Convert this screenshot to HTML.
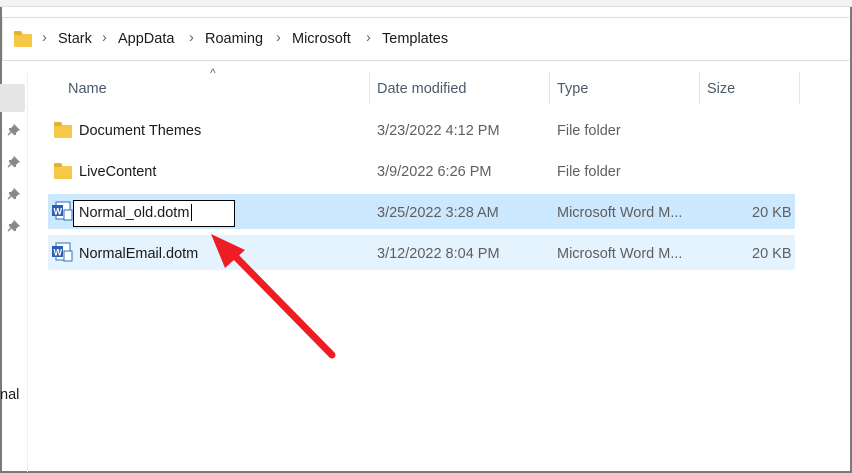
<!DOCTYPE html>
<html><head><meta charset="utf-8"><style>
body{margin:0;width:852px;height:473px;overflow:hidden;background:#fff;font-family:"Liberation Sans",sans-serif;position:relative;}
.a{position:absolute;}
.t{position:absolute;font-size:14.5px;color:#1a1a1a;white-space:nowrap;}
.g{color:#5f5f5f;}
.h{color:#4a5a6a;}
.folder{position:absolute;width:18px;height:13px;background:#f6c847;border-radius:1px;}
.folder:before{content:"";position:absolute;left:0;top:-3px;width:8px;height:4px;background:#e8b030;border-radius:1px 2px 0 0;}
</style></head><body>
<div class="a" style="left:0;top:0;width:2px;height:473px;background:#7a7a7a"></div>
<div class="a" style="right:0;top:0;width:2px;height:473px;background:#7a7a7a"></div>
<div class="a" style="left:0;bottom:0;width:852px;height:2px;background:#7a7a7a"></div>
<div class="a" style="left:0;top:0;width:852px;height:6px;background:#f3f3f3;border-bottom:1px solid #e0e0e0"></div>
<div class="a" style="left:2px;top:17px;width:846px;height:42px;border-top:1px solid #dcdcdc;border-bottom:1px solid #dcdcdc;border-left:1px solid #e6e6e6"></div>
<div class="folder" style="left:14px;top:34px"></div>
<div class="t" style="left:42px;top:30px;color:#666">›</div>
<div class="t" style="left:58px;top:31px">Stark</div>
<div class="t" style="left:102px;top:30px;color:#666">›</div>
<div class="t" style="left:118px;top:31px">AppData</div>
<div class="t" style="left:189px;top:30px;color:#666">›</div>
<div class="t" style="left:205px;top:31px">Roaming</div>
<div class="t" style="left:276px;top:30px;color:#666">›</div>
<div class="t" style="left:292px;top:31px">Microsoft</div>
<div class="t" style="left:366px;top:30px;color:#666">›</div>
<div class="t" style="left:382px;top:31px">Templates</div>
<div class="a" style="left:27px;top:72px;width:1px;height:400px;background:#f0f0f0"></div>
<div class="a" style="left:0;top:84px;width:25px;height:28px;background:#e5e5e5;border-radius:0 3px 3px 0"></div>
<svg class="a" style="left:7px;top:123px" width="14" height="112" fill="#8a8a8a">
<g id="p"><path d="M7 1 L13 7 L11 8 L9 10 L9 12 L7 12 L2 7 L2 5 L4 5 L6 3 Z"/><path d="M4 9 L1 12" stroke="#8a8a8a" stroke-width="1.5"/></g>
<use href="#p" y="32"/><use href="#p" y="64"/><use href="#p" y="96"/>
</svg>
<div class="t" style="left:0;top:387px">nal</div>
<div class="t" style="left:210px;top:66px;color:#666;font-size:12px">^</div>
<div class="t h" style="left:68px;top:81px">Name</div>
<div class="a" style="left:369px;top:72px;width:1px;height:32px;background:#e5e5e5"></div>
<div class="t h" style="left:377px;top:81px">Date modified</div>
<div class="a" style="left:549px;top:72px;width:1px;height:32px;background:#e5e5e5"></div>
<div class="t h" style="left:557px;top:81px">Type</div>
<div class="a" style="left:699px;top:72px;width:1px;height:32px;background:#e5e5e5"></div>
<div class="t h" style="left:707px;top:81px">Size</div>
<div class="a" style="left:799px;top:72px;width:1px;height:32px;background:#e5e5e5"></div>
<div class="folder" style="left:54px;top:125px"></div>
<div class="t" style="left:79px;top:123px">Document Themes</div>
<div class="t g" style="left:377px;top:123px">3/23/2022 4:12 PM</div>
<div class="t g" style="left:557px;top:123px">File folder</div>
<div class="folder" style="left:54px;top:166px"></div>
<div class="t" style="left:79px;top:164px">LiveContent</div>
<div class="t g" style="left:377px;top:164px">3/9/2022 6:26 PM</div>
<div class="t g" style="left:557px;top:164px">File folder</div>
<div class="a" style="left:48px;top:194px;width:747px;height:35px;background:#cce8ff;border-radius:2px"></div>
<div class="a" style="left:48px;top:235px;width:747px;height:35px;background:#e5f3ff;border-radius:2px"></div>
<svg class="a" style="left:52px;top:201px" width="22" height="20"><rect x="4" y="1" width="14" height="17" fill="#fff" stroke="#2b6cc4"/><rect x="0" y="4" width="11" height="11" fill="#2b5fb4"/><text x="1.5" y="13.5" font-size="9" font-weight="bold" fill="#fff" font-family="Liberation Sans">W</text><rect x="12" y="9" width="8" height="10" fill="#fff" stroke="#2b6cc4"/></svg>
<svg class="a" style="left:52px;top:242px" width="22" height="20"><rect x="4" y="1" width="14" height="17" fill="#fff" stroke="#2b6cc4"/><rect x="0" y="4" width="11" height="11" fill="#2b5fb4"/><text x="1.5" y="13.5" font-size="9" font-weight="bold" fill="#fff" font-family="Liberation Sans">W</text><rect x="12" y="9" width="8" height="10" fill="#fff" stroke="#2b6cc4"/></svg>
<div class="a" style="left:73px;top:200px;width:162px;height:27px;border:1px solid #000;background:#fff;box-sizing:border-box"></div>
<div class="t" style="left:79px;top:205px">Normal_old.dotm</div>
<div class="a" style="left:191px;top:204px;width:1px;height:17px;background:#000"></div>
<div class="t g" style="left:377px;top:205px">3/25/2022 3:28 AM</div>
<div class="t g" style="left:557px;top:205px">Microsoft Word M...</div>
<div class="t g" style="left:752px;top:205px">20 KB</div>
<div class="t" style="left:79px;top:246px">NormalEmail.dotm</div>
<div class="t g" style="left:377px;top:246px">3/12/2022 8:04 PM</div>
<div class="t g" style="left:557px;top:246px">Microsoft Word M...</div>
<div class="t g" style="left:752px;top:246px">20 KB</div>
<svg class="a" style="left:0;top:0" width="852" height="473"><line x1="332" y1="355" x2="232" y2="253" stroke="#ee1c25" stroke-width="7" stroke-linecap="round"/><polygon points="211,234 245,250 225,268" fill="#ee1c25"/></svg>
</body></html>
